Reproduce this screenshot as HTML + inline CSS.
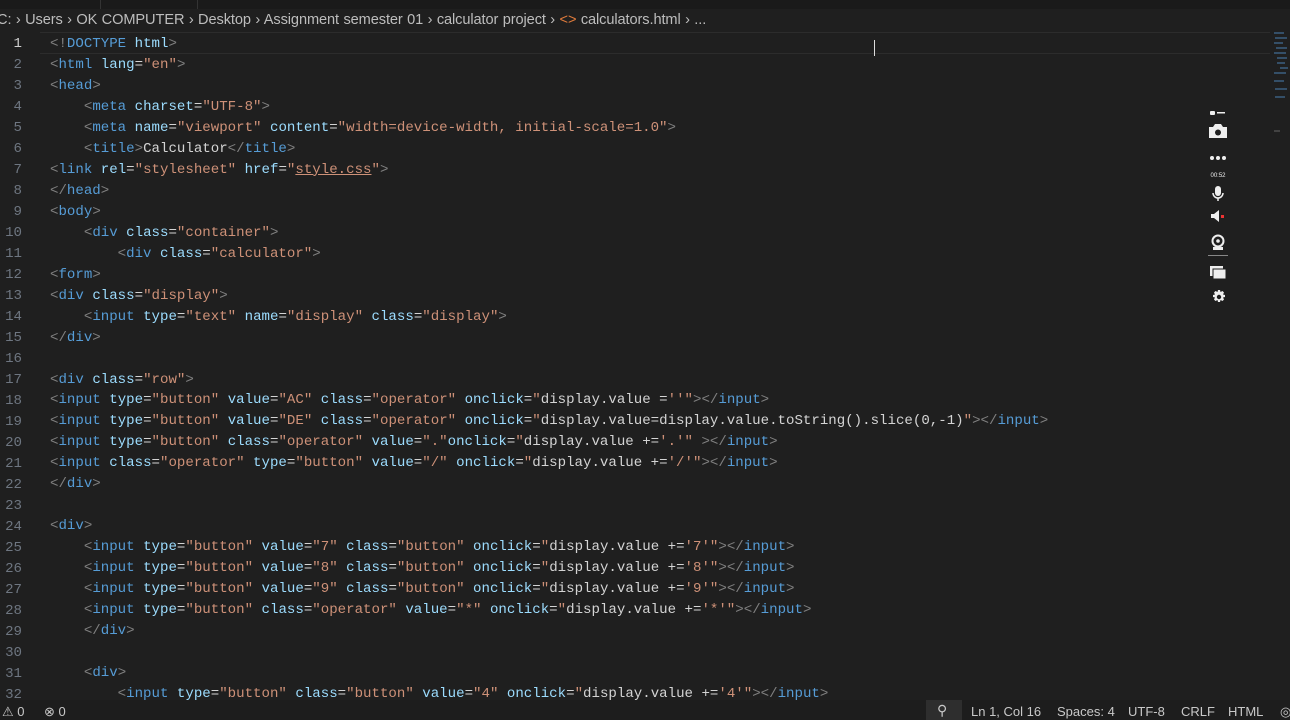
<!DOCTYPE html>
<html><head><style>
html,body{margin:0;padding:0;background:#1f1f1f;width:1290px;height:720px;overflow:hidden;font-family:"Liberation Sans",sans-serif}
.top{position:absolute;left:0;top:0;width:1290px;height:9px;background:#1a1a1a}
.top i{position:absolute;top:0;height:9px;width:1px;background:#333}
.bc{position:absolute;left:-3px;top:12px;font-size:14.6px;color:#bdbdbd;letter-spacing:-0.1px;word-spacing:0.5px;white-space:pre}
.bc b{font-weight:normal;color:#e07b3c}
.code{position:absolute;left:0;top:34px;font-family:"Liberation Mono",monospace;font-size:14.1px;line-height:20.97px;white-space:pre;color:#d4d4d4}
.ln{position:absolute;left:0;width:22px;text-align:right;color:#6e7681}
.ln.c{color:#cfcfcf}
.tx{position:absolute;left:50px;top:0}
.cur{position:absolute;left:40px;top:32px;width:1230px;height:20px;border-top:1px solid #2c2c2c;border-bottom:1px solid #2c2c2c}
.p{color:#808080}.t{color:#569cd6}.a{color:#9cdcfe}.s{color:#ce9178}
.status{position:absolute;left:0;top:700px;width:1290px;height:20px;background:#1d1d1d;font-size:13px;color:#c8c8c8}
.status span{position:absolute;top:4px}
.side{position:absolute;left:1206px;top:108px;width:24px;color:#eee}
.mm{position:absolute;left:1274px;top:30px;width:14px;height:110px;opacity:.5}
</style></head><body>
<div class="top"><i style="left:100px"></i><i style="left:197px"></i></div>
<div class="bc">C: › Users › OK COMPUTER › Desktop › Assignment semester 01 › calculator project › <b>&lt;&gt;</b> calculators.html › ...</div>
<div class="cur"></div>
<div class="code"><div class="ln c" style="top:0">1</div><div class="ln" style="top:21px">2</div><div class="ln" style="top:42px">3</div><div class="ln" style="top:63px">4</div><div class="ln" style="top:84px">5</div><div class="ln" style="top:105px">6</div><div class="ln" style="top:126px">7</div><div class="ln" style="top:147px">8</div><div class="ln" style="top:168px">9</div><div class="ln" style="top:189px">10</div><div class="ln" style="top:210px">11</div><div class="ln" style="top:231px">12</div><div class="ln" style="top:252px">13</div><div class="ln" style="top:273px">14</div><div class="ln" style="top:294px">15</div><div class="ln" style="top:315px">16</div><div class="ln" style="top:336px">17</div><div class="ln" style="top:357px">18</div><div class="ln" style="top:378px">19</div><div class="ln" style="top:399px">20</div><div class="ln" style="top:420px">21</div><div class="ln" style="top:441px">22</div><div class="ln" style="top:462px">23</div><div class="ln" style="top:483px">24</div><div class="ln" style="top:504px">25</div><div class="ln" style="top:525px">26</div><div class="ln" style="top:546px">27</div><div class="ln" style="top:567px">28</div><div class="ln" style="top:588px">29</div><div class="ln" style="top:609px">30</div><div class="ln" style="top:630px">31</div><div class="ln" style="top:651px">32</div><div class="tx"><span class="p">&lt;!</span><span class="t">DOCTYPE</span> <span class="a">html</span><span class="p">&gt;</span>
<span class="p">&lt;</span><span class="t">html</span> <span class="a">lang</span>=<span class="s">"en"</span><span class="p">&gt;</span>
<span class="p">&lt;</span><span class="t">head</span><span class="p">&gt;</span>
    <span class="p">&lt;</span><span class="t">meta</span> <span class="a">charset</span>=<span class="s">"UTF-8"</span><span class="p">&gt;</span>
    <span class="p">&lt;</span><span class="t">meta</span> <span class="a">name</span>=<span class="s">"viewport"</span> <span class="a">content</span>=<span class="s">"width=device-width, initial-scale=1.0"</span><span class="p">&gt;</span>
    <span class="p">&lt;</span><span class="t">title</span><span class="p">&gt;</span>Calculator<span class="p">&lt;/</span><span class="t">title</span><span class="p">&gt;</span>
<span class="p">&lt;</span><span class="t">link</span> <span class="a">rel</span>=<span class="s">"stylesheet"</span> <span class="a">href</span>=<span class="s">"<u>style.css</u>"</span><span class="p">&gt;</span>
<span class="p">&lt;/</span><span class="t">head</span><span class="p">&gt;</span>
<span class="p">&lt;</span><span class="t">body</span><span class="p">&gt;</span>
    <span class="p">&lt;</span><span class="t">div</span> <span class="a">class</span>=<span class="s">"container"</span><span class="p">&gt;</span>
        <span class="p">&lt;</span><span class="t">div</span> <span class="a">class</span>=<span class="s">"calculator"</span><span class="p">&gt;</span>
<span class="p">&lt;</span><span class="t">form</span><span class="p">&gt;</span>
<span class="p">&lt;</span><span class="t">div</span> <span class="a">class</span>=<span class="s">"display"</span><span class="p">&gt;</span>
    <span class="p">&lt;</span><span class="t">input</span> <span class="a">type</span>=<span class="s">"text"</span> <span class="a">name</span>=<span class="s">"display"</span> <span class="a">class</span>=<span class="s">"display"</span><span class="p">&gt;</span>
<span class="p">&lt;/</span><span class="t">div</span><span class="p">&gt;</span>

<span class="p">&lt;</span><span class="t">div</span> <span class="a">class</span>=<span class="s">"row"</span><span class="p">&gt;</span>
<span class="p">&lt;</span><span class="t">input</span> <span class="a">type</span>=<span class="s">"button"</span> <span class="a">value</span>=<span class="s">"AC"</span> <span class="a">class</span>=<span class="s">"operator"</span> <span class="a">onclick</span>=<span class="s">"</span>display.value =<span class="s">''"</span><span class="p">&gt;&lt;/</span><span class="t">input</span><span class="p">&gt;</span>
<span class="p">&lt;</span><span class="t">input</span> <span class="a">type</span>=<span class="s">"button"</span> <span class="a">value</span>=<span class="s">"DE"</span> <span class="a">class</span>=<span class="s">"operator"</span> <span class="a">onclick</span>=<span class="s">"</span>display.value=display.value.toString().slice(0,-1)<span class="s">"</span><span class="p">&gt;&lt;/</span><span class="t">input</span><span class="p">&gt;</span>
<span class="p">&lt;</span><span class="t">input</span> <span class="a">type</span>=<span class="s">"button"</span> <span class="a">class</span>=<span class="s">"operator"</span> <span class="a">value</span>=<span class="s">"."</span><span class="a">onclick</span>=<span class="s">"</span>display.value +=<span class="s">'.'"</span> <span class="p">&gt;&lt;/</span><span class="t">input</span><span class="p">&gt;</span>
<span class="p">&lt;</span><span class="t">input</span> <span class="a">class</span>=<span class="s">"operator"</span> <span class="a">type</span>=<span class="s">"button"</span> <span class="a">value</span>=<span class="s">"/"</span> <span class="a">onclick</span>=<span class="s">"</span>display.value +=<span class="s">'/'"</span><span class="p">&gt;&lt;/</span><span class="t">input</span><span class="p">&gt;</span>
<span class="p">&lt;/</span><span class="t">div</span><span class="p">&gt;</span>

<span class="p">&lt;</span><span class="t">div</span><span class="p">&gt;</span>
    <span class="p">&lt;</span><span class="t">input</span> <span class="a">type</span>=<span class="s">"button"</span> <span class="a">value</span>=<span class="s">"7"</span> <span class="a">class</span>=<span class="s">"button"</span> <span class="a">onclick</span>=<span class="s">"</span>display.value +=<span class="s">'7'"</span><span class="p">&gt;&lt;/</span><span class="t">input</span><span class="p">&gt;</span>
    <span class="p">&lt;</span><span class="t">input</span> <span class="a">type</span>=<span class="s">"button"</span> <span class="a">value</span>=<span class="s">"8"</span> <span class="a">class</span>=<span class="s">"button"</span> <span class="a">onclick</span>=<span class="s">"</span>display.value +=<span class="s">'8'"</span><span class="p">&gt;&lt;/</span><span class="t">input</span><span class="p">&gt;</span>
    <span class="p">&lt;</span><span class="t">input</span> <span class="a">type</span>=<span class="s">"button"</span> <span class="a">value</span>=<span class="s">"9"</span> <span class="a">class</span>=<span class="s">"button"</span> <span class="a">onclick</span>=<span class="s">"</span>display.value +=<span class="s">'9'"</span><span class="p">&gt;&lt;/</span><span class="t">input</span><span class="p">&gt;</span>
    <span class="p">&lt;</span><span class="t">input</span> <span class="a">type</span>=<span class="s">"button"</span> <span class="a">class</span>=<span class="s">"operator"</span> <span class="a">value</span>=<span class="s">"*"</span> <span class="a">onclick</span>=<span class="s">"</span>display.value +=<span class="s">'*'"</span><span class="p">&gt;&lt;/</span><span class="t">input</span><span class="p">&gt;</span>
    <span class="p">&lt;/</span><span class="t">div</span><span class="p">&gt;</span>

    <span class="p">&lt;</span><span class="t">div</span><span class="p">&gt;</span>
        <span class="p">&lt;</span><span class="t">input</span> <span class="a">type</span>=<span class="s">"button"</span> <span class="a">class</span>=<span class="s">"button"</span> <span class="a">value</span>=<span class="s">"4"</span> <span class="a">onclick</span>=<span class="s">"</span>display.value +=<span class="s">'4'"</span><span class="p">&gt;&lt;/</span><span class="t">input</span><span class="p">&gt;</span></div></div>
<div class="mm">
<svg width="14" height="110"><g fill="#4a7fb0"><rect x="0" y="2" width="10" height="2"/><rect x="1" y="7" width="12" height="2"/><rect x="0" y="12" width="9" height="2"/><rect x="2" y="17" width="11" height="2"/><rect x="0" y="22" width="12" height="2"/><rect x="3" y="27" width="10" height="2"/><rect x="3" y="32" width="8" height="2"/><rect x="6" y="37" width="8" height="2"/><rect x="0" y="42" width="12" height="2"/><rect x="0" y="50" width="10" height="2"/><rect x="1" y="58" width="12" height="2"/><rect x="1" y="66" width="10" height="2"/></g><rect x="0" y="100" width="6" height="2" fill="#666"/></svg>
</div>
<div style="position:absolute;left:874px;top:40px;width:1px;height:16px;background:#ddd"></div>
<div class="side">
<svg width="24" height="200" viewBox="0 0 24 200" fill="#eee">
<rect x="4" y="3" width="5" height="4" rx="1"/><rect x="11" y="4" width="8" height="1.5"/>
<path d="M3 19h4l2-3h6l2 3h4v11H3z"/><circle cx="12" cy="24.5" r="3" fill="#1f1f1f"/>
<circle cx="6" cy="50" r="2"/><circle cx="12" cy="50" r="2"/><circle cx="18" cy="50" r="2"/>
<text x="12" y="69" font-size="6" text-anchor="middle" font-family="Liberation Sans">00:52</text>
<rect x="9" y="78" width="6" height="10" rx="3"/><path d="M7 85a5 5 0 0 0 10 0M12 90v3" stroke="#eee" fill="none" stroke-width="1.5"/>
<path d="M5 106h3l5-4v12l-5-4H5z"/><rect x="15" y="107" width="3" height="3" fill="#e33"/>
<circle cx="12" cy="133" r="5.5" fill="none" stroke="#eee" stroke-width="2"/><circle cx="12" cy="133" r="1.8"/><rect x="7" y="139" width="10" height="3"/>
<rect x="2" y="147" width="20" height="1" fill="#888"/>
<rect x="4" y="158" width="13" height="10"/><rect x="7" y="161" width="13" height="10" stroke="#1f1f1f" stroke-width="1"/>
<path d="M12 182l2 0 .5 2 2-1 1.5 1.5-1 2 2 .5v2l-2 .5 1 2-1.5 1.5-2-1-.5 2h-2l-.5-2-2 1-1.5-1.5 1-2-2-.5v-2l2-.5-1-2 1.5-1.5 2 1z"/><circle cx="13" cy="189" r="2.2" fill="#1f1f1f"/>
</svg>
</div>
<div class="status">
<span style="left:2px">⚠ 0</span><span style="left:44px">⊗ 0</span>
<span style="left:926px;top:0;width:36px;height:20px;background:#2e2e2e"></span>
<span style="left:937px;top:2px;font-size:14px">&#9906;</span>
<span style="left:971px">Ln 1, Col 16</span><span style="left:1057px">Spaces: 4</span><span style="left:1128px">UTF-8</span><span style="left:1181px">CRLF</span><span style="left:1228px">HTML</span><span style="left:1280px">◎</span>
</div>
</body></html>
